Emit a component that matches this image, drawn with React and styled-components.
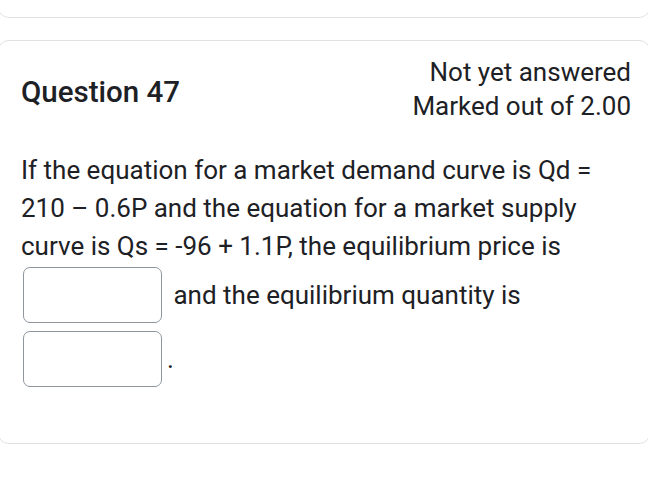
import React from 'react';
import styled, { createGlobalStyle } from 'styled-components';

const GlobalStyle = createGlobalStyle`
  body {
    margin: 0;
    background: #ffffff;
    font-family: Roboto, "Liberation Sans", sans-serif;
    color: #1d2125;
    overflow: hidden;
  }
`;

const Page = styled.div`
  width: 648px;
  height: 486px;
  overflow: hidden;
`;

const Card = styled.div`
  margin: 0 -3px;
  background: #fff;
  border: 1px solid #dfe1e4;
  border-radius: 12px;
`;

const PrevCard = styled(Card)`
  height: 116px;
  margin-top: -100px;
  margin-bottom: 22px;
`;

const Header = styled.div`
  display: flex;
  align-items: center;
  justify-content: space-between;
  padding: 14px 19px 0 23px;
`;

const Title = styled.h3`
  margin: 6px 0 0;
  font-size: 29.5px;
  font-weight: 500;
  color: #1d2125;
`;

const Status = styled.div`
  text-align: right;
  font-size: 26px;
  line-height: 34px;
  color: #1d2125;
`;

const Body = styled.div`
  padding: 28px 23px 50px 23px;
  width: 608px;
  box-sizing: content-box;
`;

const Text = styled.p`
  margin: 0;
  font-size: 26px;
  line-height: 38px;
  color: #1d2125;
`;

const Blank = styled.input`
  display: inline-block;
  box-sizing: border-box;
  width: 139px;
  height: 56px;
  margin: 2px 5px 6px 2px;
  padding: 0;
  vertical-align: middle;
  border: 1px solid #8f959e;
  border-radius: 7px;
  background: #fff;
  outline: none;
  font: inherit;
`;

export default function App() {
  return (
    <Page>
      <GlobalStyle />
      <PrevCard />
      <Card>
        <Header>
          <Title>Question 47</Title>
          <Status>
            <div>Not yet answered</div>
            <div>Marked out of 2.00</div>
          </Status>
        </Header>
        <Body>
          <Text>
            If the equation for a market demand curve is Qd = 210 – 0.6P and the
            equation for a market supply curve is Qs = -96 + 1.1P, the
            equilibrium price is <Blank type="text" /> and the equilibrium
            quantity is <Blank type="text" />.
          </Text>
        </Body>
      </Card>
    </Page>
  );
}
